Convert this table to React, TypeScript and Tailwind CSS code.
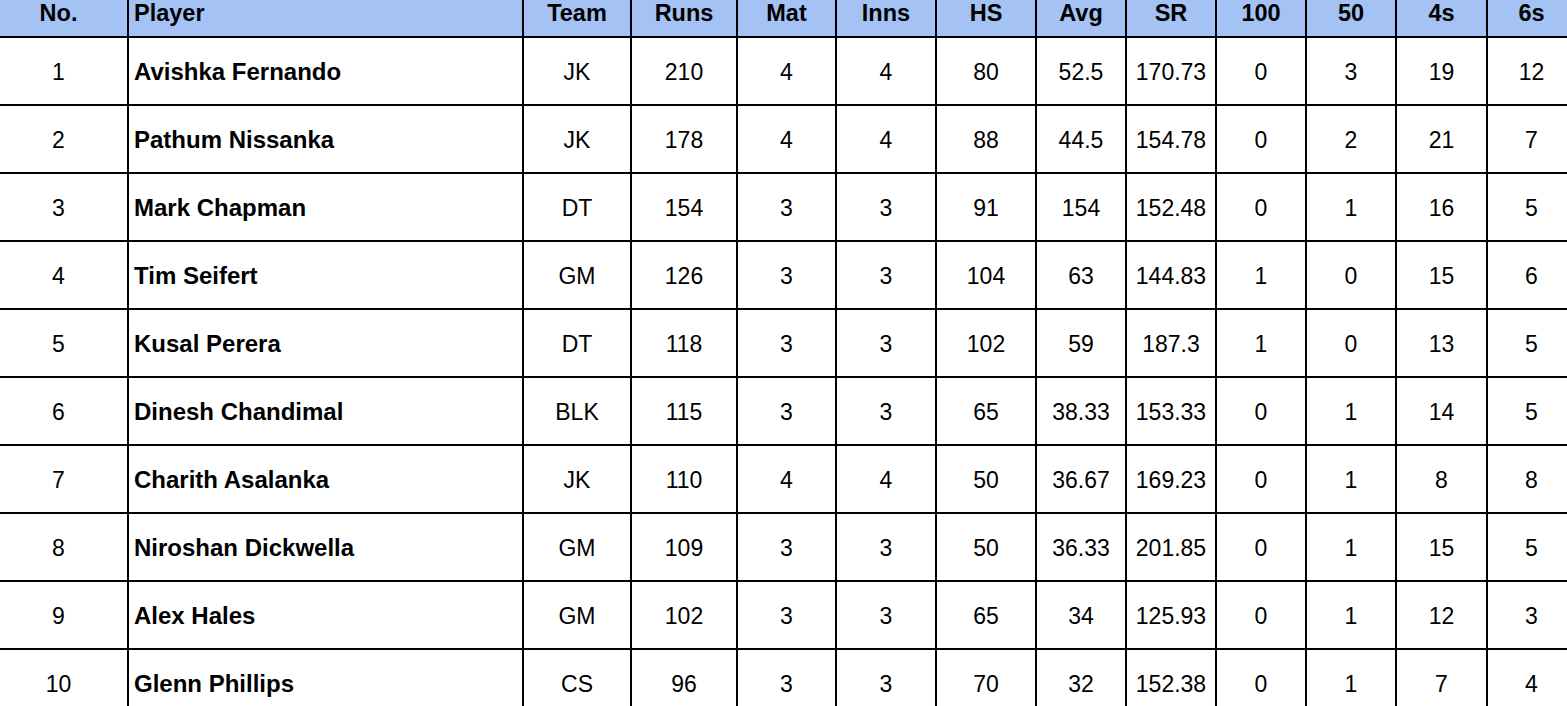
import React from 'react';

const headers = ['No.', 'Player', 'Team', 'Runs', 'Mat', 'Inns', 'HS', 'Avg', 'SR', '100', '50', '4s', '6s'];

const rows: string[][] = [
  ['1', 'Avishka Fernando', 'JK', '210', '4', '4', '80', '52.5', '170.73', '0', '3', '19', '12'],
  ['2', 'Pathum Nissanka', 'JK', '178', '4', '4', '88', '44.5', '154.78', '0', '2', '21', '7'],
  ['3', 'Mark Chapman', 'DT', '154', '3', '3', '91', '154', '152.48', '0', '1', '16', '5'],
  ['4', 'Tim Seifert', 'GM', '126', '3', '3', '104', '63', '144.83', '1', '0', '15', '6'],
  ['5', 'Kusal Perera', 'DT', '118', '3', '3', '102', '59', '187.3', '1', '0', '13', '5'],
  ['6', 'Dinesh Chandimal', 'BLK', '115', '3', '3', '65', '38.33', '153.33', '0', '1', '14', '5'],
  ['7', 'Charith Asalanka', 'JK', '110', '4', '4', '50', '36.67', '169.23', '0', '1', '8', '8'],
  ['8', 'Niroshan Dickwella', 'GM', '109', '3', '3', '50', '36.33', '201.85', '0', '1', '15', '5'],
  ['9', 'Alex Hales', 'GM', '102', '3', '3', '65', '34', '125.93', '0', '1', '12', '3'],
  ['10', 'Glenn Phillips', 'CS', '96', '3', '3', '70', '32', '152.38', '0', '1', '7', '4'],
];

const gridCols =
  'grid grid-cols-[129px_395px_108px_106px_99px_100px_100px_90px_90px_90px_90px_91px_79px]';

// per-column alignment tweaks
const align = (i: number) => {
  if (i === 1) return 'justify-start pl-[5px]';
  if (i === 0) return 'justify-center pr-[10px]';
  if (i === 12) return 'justify-center pl-[8px]';
  return 'justify-center';
};

export default function App() {
  return (
    <div className="w-[1567px] h-[706px] overflow-hidden bg-white text-black font-['Liberation_Sans',Arial,sans-serif] text-[23px] leading-none">
      {/* header */}
      <div className={`${gridCols} grid-rows-[38px] h-[38px] bg-[#a4c2f4]`}>
        {headers.map((h, i) => (
          <div
            key={h}
            className={`flex items-center pb-[9px] font-bold text-[23.5px] border-b-2 border-black ${
              i < headers.length - 1 ? 'border-r-2' : ''
            } ${align(i)}`}
          >
            {h}
          </div>
        ))}
      </div>

      {rows.map((r) => (
        <div key={r[0]} className={`${gridCols} grid-rows-[68px] h-[68px]`}>
          {r.map((c, i) => (
            <div
              key={i}
              className={`flex items-center pt-[2px] border-b-2 border-black ${
                i < r.length - 1 ? 'border-r-2' : ''
              } ${align(i)} ${i === 1 ? 'font-bold text-[24px]' : ''}`}
            >
              {c}
            </div>
          ))}
        </div>
      ))}
    </div>
  );
}
